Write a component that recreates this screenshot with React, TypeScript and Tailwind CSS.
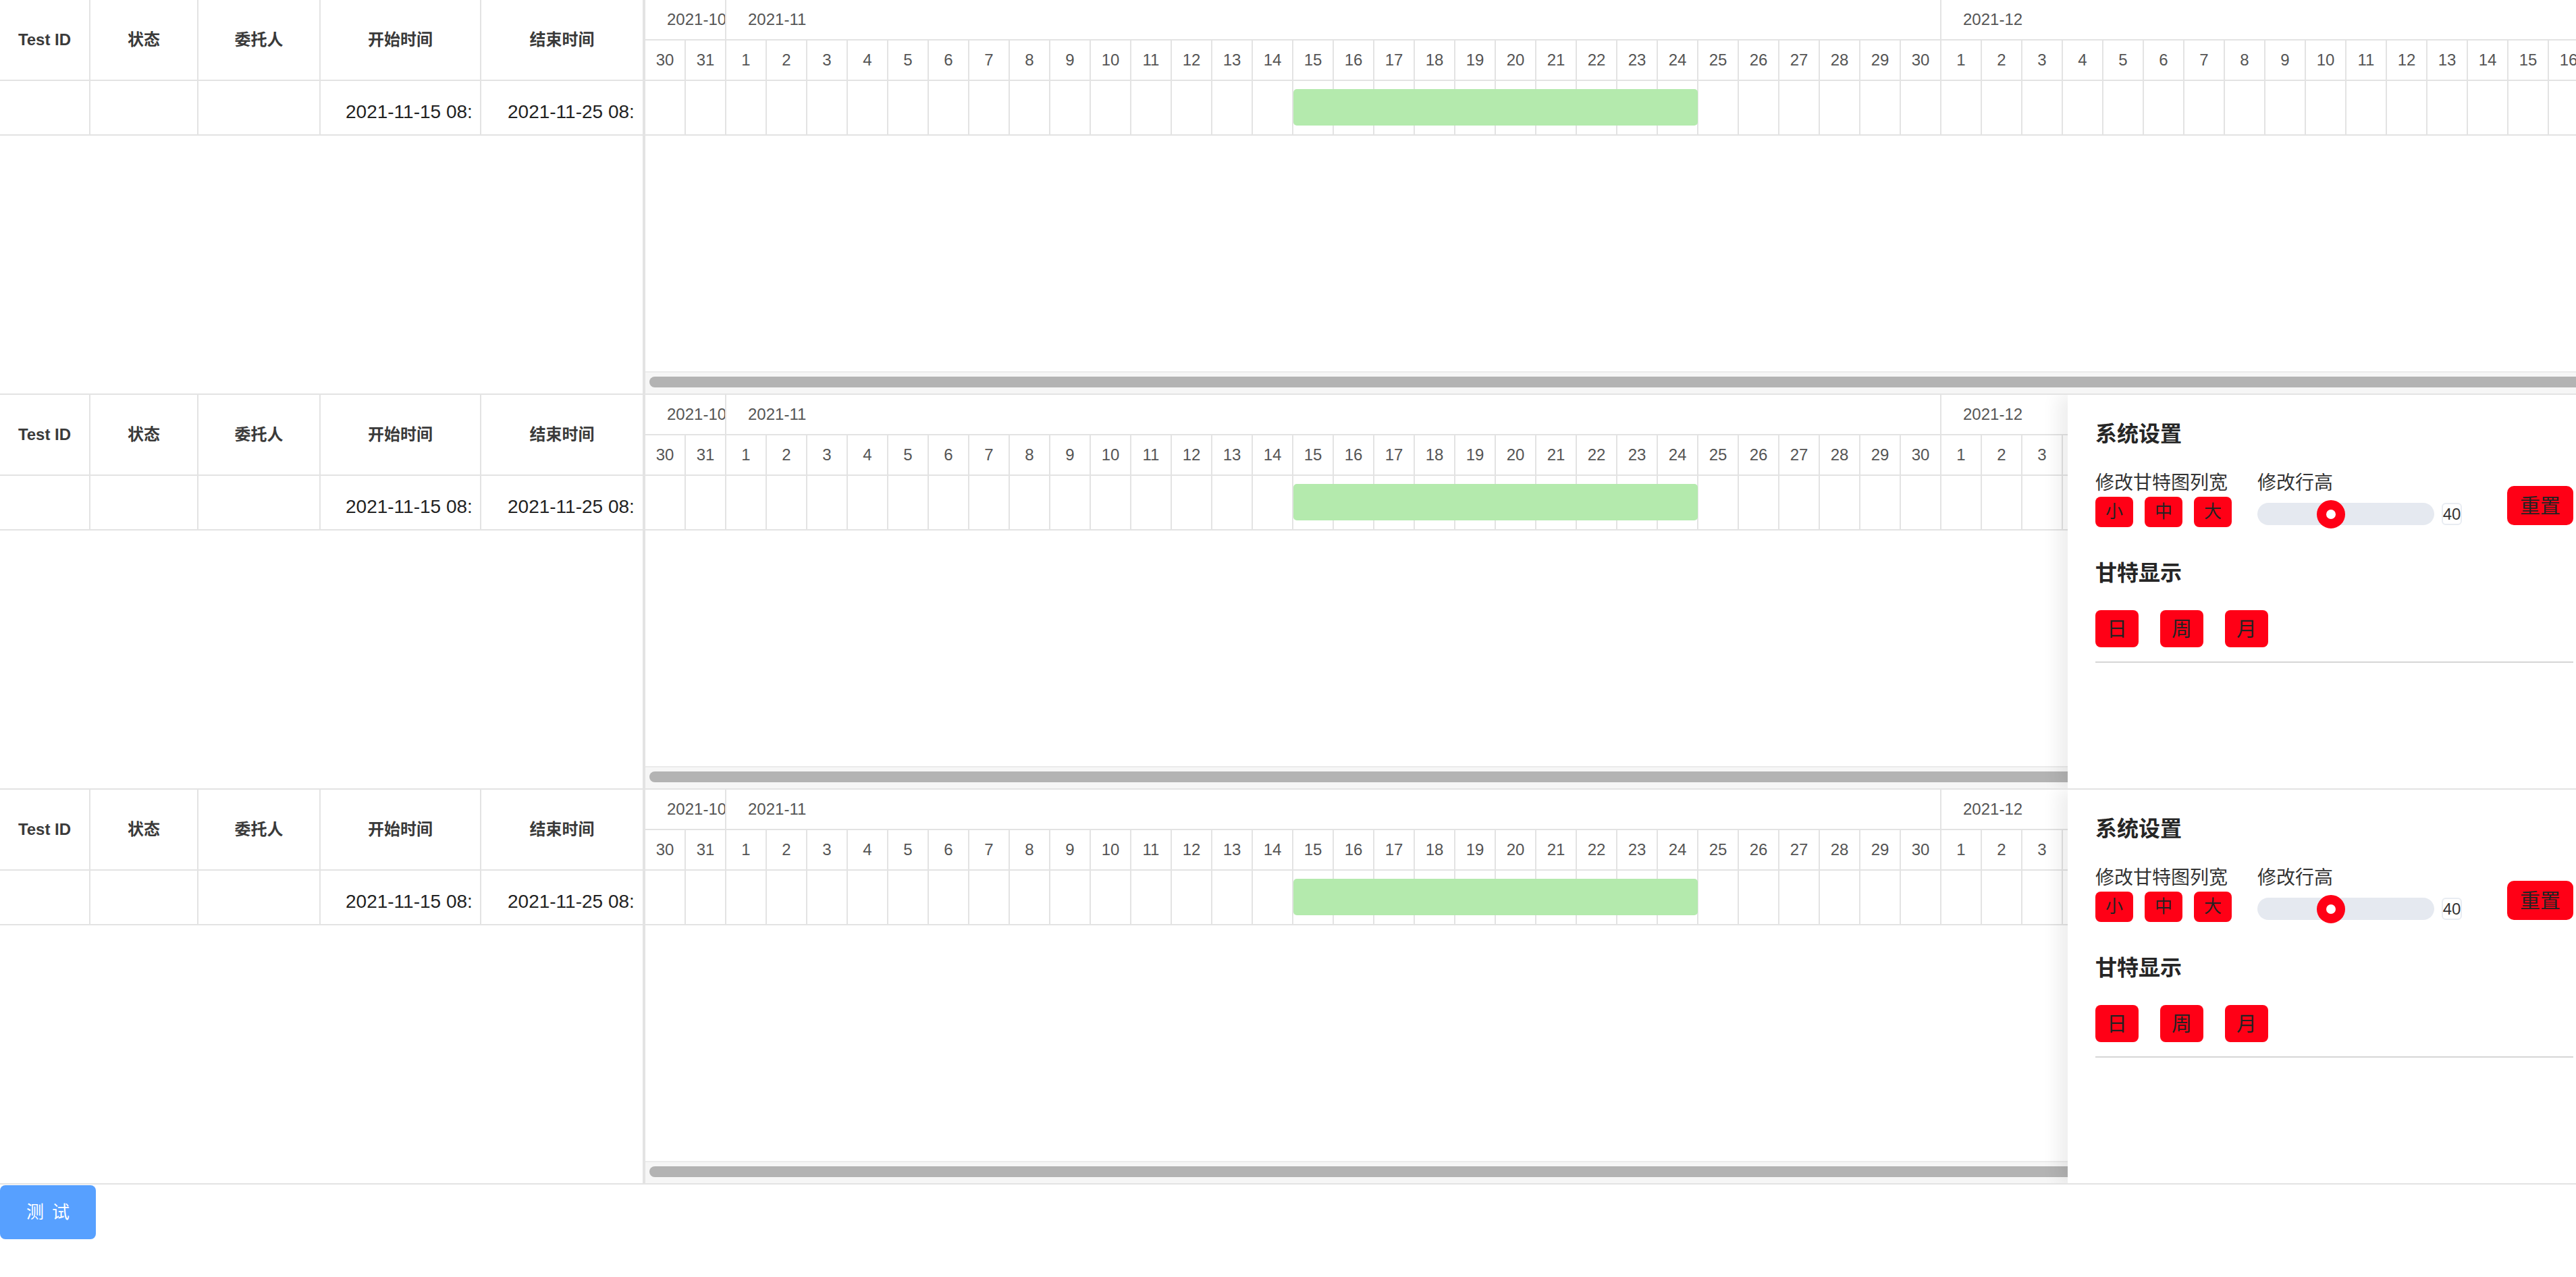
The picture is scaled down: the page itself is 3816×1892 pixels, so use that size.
import React from 'react';

type Month = { label: string; days: number[] };

const range = (a: number, b: number) => Array.from({ length: b - a + 1 }, (_, i) => a + i);

const months: Month[] = [
  { label: '2021-10', days: [30, 31] },
  { label: '2021-11', days: range(1, 30) },
  { label: '2021-12', days: range(1, 31) },
];

const allDays = months.flatMap((m) => m.days.map((d) => `${m.label}-${d}`));

function LeftTable() {
  return (
    <div className="w-[956px] shrink-0 border-r-4 border-[#e3e3e3] flex flex-col">
      <div className="flex h-[120px] border-b-2 border-[#e3e3e3] text-[24px] font-semibold text-[#3a3a3a]">
        <div className="w-[134px] border-r-2 border-[#e3e3e3] flex items-center justify-center">Test ID</div>
        <div className="w-[160px] border-r-2 border-[#e3e3e3] flex items-center justify-center">状态</div>
        <div className="w-[181px] border-r-2 border-[#e3e3e3] flex items-center justify-center">委托人</div>
        <div className="w-[238px] border-r-2 border-[#e3e3e3] flex items-center justify-center">开始时间</div>
        <div className="flex-1 flex items-center justify-center">结束时间</div>
      </div>
      <div className="flex h-[81px] border-b-2 border-[#e3e3e3] text-[28px] text-[#222]">
        <div className="w-[134px] border-r-2 border-[#e3e3e3]" />
        <div className="w-[160px] border-r-2 border-[#e3e3e3]" />
        <div className="w-[181px] border-r-2 border-[#e3e3e3]" />
        <div className="w-[238px] border-r-2 border-[#e3e3e3] pl-[37px] pt-[12px] flex items-center whitespace-nowrap">
          2021-11-15 08:
        </div>
        <div className="flex-1 pl-[39px] pt-[12px] flex items-center whitespace-nowrap">
          2021-11-25 08:
        </div>
      </div>
    </div>
  );
}

function Gantt() {
  return (
    <div className="flex-1 min-w-0 flex flex-col overflow-hidden">
      <div className="flex h-[60px] border-b-2 border-[#e3e3e3] text-[24px] text-[#555]">
        {months.map((m) => (
          <div
            key={m.label}
            style={{ width: m.days.length * 60 }}
            className="shrink-0 border-r-2 border-[#e3e3e3] pl-[32px] leading-[58px] overflow-hidden whitespace-nowrap"
          >
            {m.label}
          </div>
        ))}
      </div>
      <div className="flex h-[60px] border-b-2 border-[#e3e3e3] text-[24px] text-[#555]">
        {months.flatMap((m) =>
          m.days.map((d) => (
            <div
              key={`${m.label}-${d}`}
              className="w-[60px] shrink-0 border-r-2 border-[#e3e3e3] flex items-center justify-center"
            >
              {d}
            </div>
          ))
        )}
      </div>
      <div className="relative flex h-[81px] border-b-2 border-[#e3e3e3]">
        {allDays.map((k) => (
          <div key={k} className="w-[60px] shrink-0 border-r-2 border-[#e3e3e3]" />
        ))}
        <div className="absolute left-[960px] top-[12px] h-[54px] w-[599px] rounded-[5px] bg-[#b4eaad]" />
      </div>
      <div className="flex-1" />
      <div className="h-[33px] shrink-0 border-t-2 border-[#ebebeb] bg-[#f6f6f6] pt-[6px] pl-[6px] overflow-hidden">
        <div className="h-[16px] w-[4000px] rounded-full bg-[#b3b3b3]" />
      </div>
    </div>
  );
}

function RedBtn({ children, className }: { children: React.ReactNode; className: string }) {
  return (
    <button className={`bg-[#ff0016] text-[#222] flex items-center justify-center ${className}`}>
      {children}
    </button>
  );
}

function Settings() {
  return (
    <div className="absolute right-0 top-0 h-[583px] w-[753px] bg-white pl-[41px] pr-[4px] pt-[34px] shadow-[-14px_0_24px_rgba(0,0,0,0.07)]">
      <div className="text-[32px] leading-[48px] font-semibold text-[#262626]">系统设置</div>
      <div className="mt-[31px] flex items-start">
        <div>
          <div className="text-[28px] leading-[36px] text-[#333]">修改甘特图列宽</div>
          <div className="mt-[2px] flex gap-[17px]">
            <RedBtn className="w-[56px] h-[45px] rounded-[8px] text-[26px]">小</RedBtn>
            <RedBtn className="w-[56px] h-[45px] rounded-[8px] text-[26px]">中</RedBtn>
            <RedBtn className="w-[56px] h-[45px] rounded-[8px] text-[26px]">大</RedBtn>
          </div>
        </div>
        <div className="ml-[38px]">
          <div className="text-[28px] leading-[36px] text-[#333]">修改行高</div>
          <div className="mt-[5px] h-[45px] flex items-center">
            <div className="relative w-[262px] h-[33px] rounded-full bg-[#e5e9f0]">
              <div className="absolute left-[88px] top-[-4px] w-[42px] h-[42px] rounded-full border-[14px] border-[#ff0016] bg-white" />
            </div>
            <div className="ml-[11px] w-[30px] h-[33px] rounded-[6px] border-2 border-[#e8ecf2] flex items-center justify-center text-[24px] text-[#333]">
              40
            </div>
          </div>
        </div>
        <RedBtn className="ml-auto mt-[22px] w-[98px] h-[58px] rounded-[10px] text-[30px]">重置</RedBtn>
      </div>
      <div className="mt-[41px] text-[32px] leading-[48px] font-semibold text-[#262626]">甘特显示</div>
      <div className="mt-[31px] flex gap-[32px]">
        <RedBtn className="w-[64px] h-[55px] rounded-[8px] text-[30px]">日</RedBtn>
        <RedBtn className="w-[64px] h-[55px] rounded-[8px] text-[30px]">周</RedBtn>
        <RedBtn className="w-[64px] h-[55px] rounded-[8px] text-[30px]">月</RedBtn>
      </div>
      <div className="mt-[21px] h-[2px] bg-[#d6d6d6]" />
    </div>
  );
}

function Panel({ settings }: { settings?: boolean }) {
  return (
    <div className="relative flex h-[585px] border-b-2 border-[#e3e3e3] overflow-hidden">
      <LeftTable />
      <Gantt />
      {settings && <Settings />}
    </div>
  );
}

export default function App() {
  return (
    <div className="min-h-screen bg-white font-[family-name:'Liberation_Sans','Noto_Sans_CJK_SC',sans-serif]">
      <Panel />
      <Panel settings />
      <Panel settings />
      <div className="flex pt-[1px]">
        <button className="w-[142px] h-[80px] rounded-[8px] bg-[#57a0ff] text-white text-[26px] flex items-center justify-center">
          <span className="tracking-[12px] mr-[-12px]">测试</span>
        </button>
      </div>
    </div>
  );
}
